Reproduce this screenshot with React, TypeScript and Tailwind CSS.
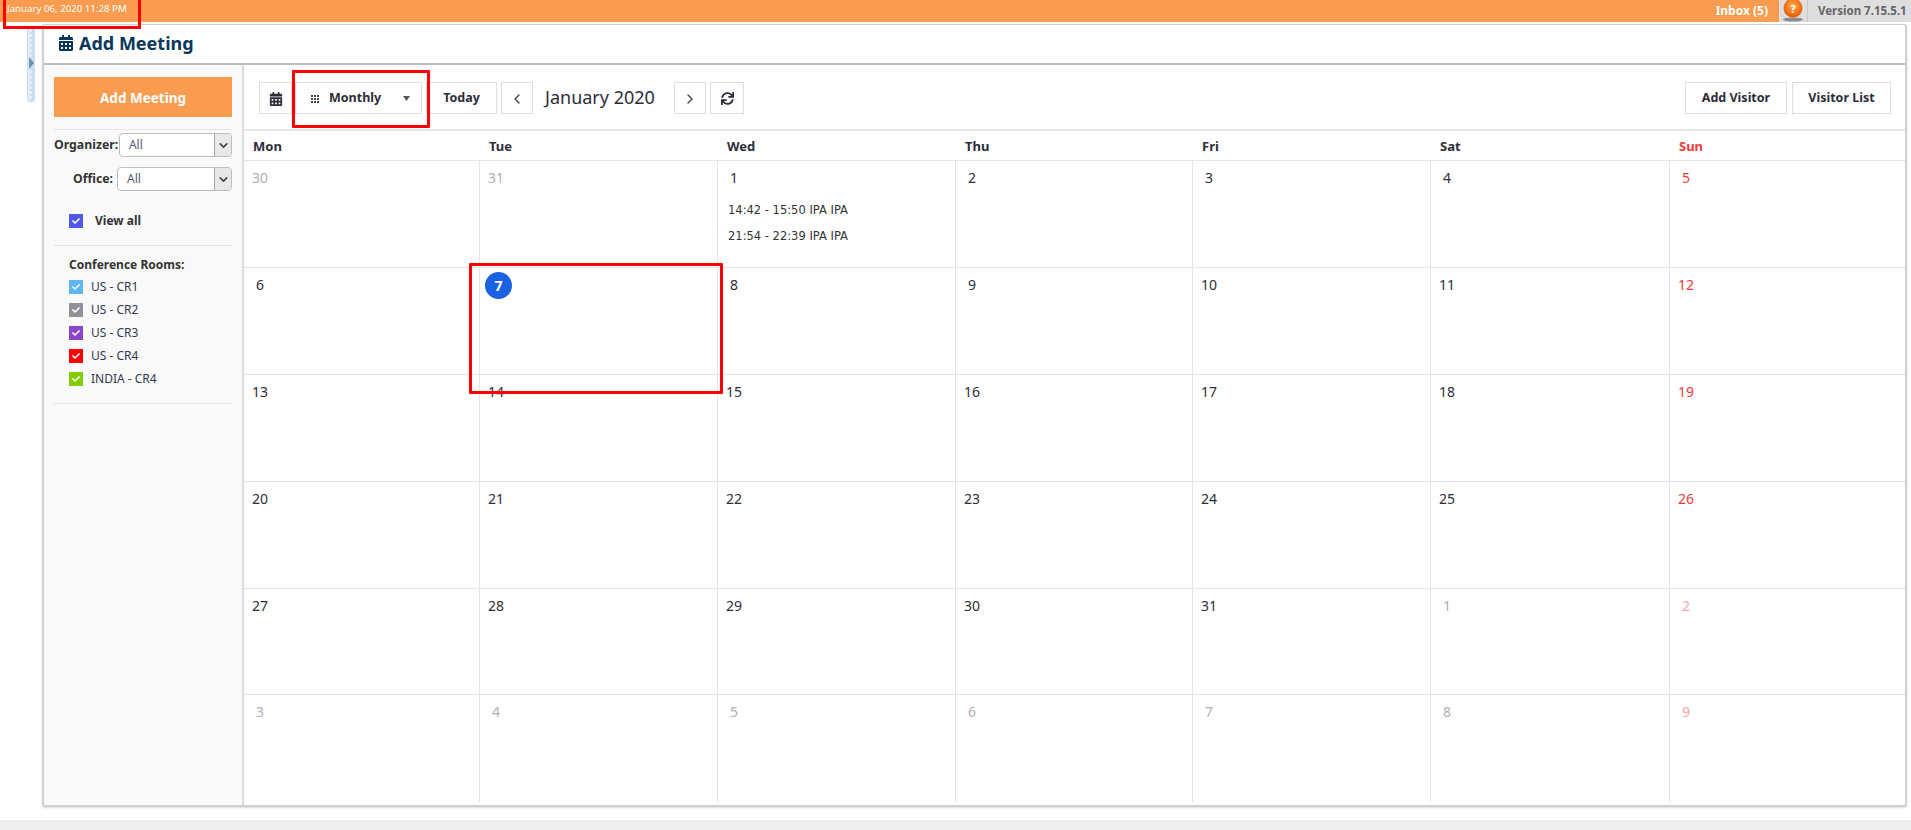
import { ChevronLeft, ChevronRight, ChevronDown } from "lucide-react";
import { FaCalendarAlt, FaCheck, FaSync } from "react-icons/fa";

const rooms = [
  { name: "US - CR1", color: "bg-[#5cb7f4]" },
  { name: "US - CR2", color: "bg-[#8f9196]" },
  { name: "US - CR3", color: "bg-[#8b45c9]" },
  { name: "US - CR4", color: "bg-[#ff0000]" },
  { name: "INDIA - CR4", color: "bg-[#84cc00]" },
];

const weekdays = ["Mon", "Tue", "Wed", "Thu", "Fri", "Sat", "Sun"];

const weeks = [
  [30, 31, 1, 2, 3, 4, 5],
  [6, 7, 8, 9, 10, 11, 12],
  [13, 14, 15, 16, 17, 18, 19],
  [20, 21, 22, 23, 24, 25, 26],
  [27, 28, 29, 30, 31, 1, 2],
  [3, 4, 5, 6, 7, 8, 9],
];

const columns = "grid-cols-[236px_238px_238px_237px_238px_239px_1fr]";

function ToolButton({ className, children }: { className: string; children: React.ReactNode }) {
  return (
    <div className={`flex h-8 shrink-0 items-center justify-center border border-[#dedede] bg-white pt-[2px] text-[12.5px] font-bold text-[#2d2d3a] ${className}`}>
      {children}
    </div>
  );
}

function SideSelect({ label, labelWidth }: { label: string; labelWidth: string }) {
  return (
    <div className="flex h-[24px] items-center justify-end">
      <span className={`text-[12.3px] font-bold text-[#333] ${labelWidth}`}>{label}</span>
      <div className="flex h-[24px] w-[115px] items-stretch rounded-[4px] border border-[#bdbdbd] bg-white">
        <span className="flex-1 pl-[9px] text-[12px] leading-[22px] text-[#555a70]">All</span>
        <span className="flex w-[17px] items-center justify-center rounded-r-[3px] border-l border-[#a8a8a8] bg-[#e8e8e8]">
          <ChevronDown size={13} strokeWidth={3} className="text-[#444]" />
        </span>
      </div>
    </div>
  );
}

function Box({ color }: { color: string }) {
  return (
    <span className={`flex h-[14px] w-[14px] shrink-0 items-center justify-center ${color}`}>
      <FaCheck size={8} className="text-white" />
    </span>
  );
}

function Sidebar() {
  return (
    <aside className="flex w-[200px] shrink-0 flex-col border-r-2 border-[#dcdcdc] bg-[#f9f9f9] px-[10px] pt-[12px]">
      <div className="flex h-[40px] items-center justify-center bg-[#f99c4f] pt-[2px] text-[13.5px] font-bold text-white">Add Meeting</div>
      <div className="mt-[12px] flex flex-col gap-[10px] border-t border-[#e4e4e4] pt-[3px]">
        <SideSelect label="Organizer:" labelWidth="w-[66px]" />
        <SideSelect label="Office:" labelWidth="w-[42px] mr-[2px]" />
      </div>
      <div className="mt-[21px] flex items-center gap-[12px] pl-[15px] text-[12px] font-bold text-[#333]">
        <Box color="bg-[#4f58e8]" />
        View all
      </div>
      <div className="mt-[15px] border-y border-[#e4e4e4] pb-[17px] pl-[15px] pt-[10px]">
        <div className="text-[12px] font-bold leading-[18px] text-[#333]">Conference Rooms:</div>
        <div className="mt-[6px] flex flex-col gap-[9px]">
          {rooms.map((room) => (
            <div key={room.name} className="flex h-[14px] items-center gap-[8px] text-[12px] text-[#333850]">
              <Box color={room.color} />
              {room.name}
            </div>
          ))}
        </div>
      </div>
    </aside>
  );
}

function Toolbar() {
  return (
    <div className="flex h-[66px] shrink-0 items-center border-b-2 border-[#e6e6e6] pl-[15px] pr-[14px] pt-[1px]">
      <ToolButton className="w-[33px]">
        <FaCalendarAlt size={14} />
      </ToolButton>
      <ToolButton className="ml-[3px] w-[127px] !justify-start pl-[15px]">
        <svg width="8" height="8" viewBox="0 0 8 8" className="fill-[#444]">
          {[0, 3, 6].map((y) =>
            [0, 3, 6].map((x) => <rect key={`${x}-${y}`} x={x} y={y} width="2" height="2" />)
          )}
        </svg>
        <span className="ml-[10px]">Monthly</span>
        <svg width="7" height="5" viewBox="0 0 7 5" className="ml-[22px] fill-[#555]">
          <path d="M0 0h7L3.5 5z" />
        </svg>
      </ToolButton>
      <ToolButton className="ml-[4px] w-[71px]">Today</ToolButton>
      <ToolButton className="ml-[4px] w-[32px]">
        <ChevronLeft size={16} strokeWidth={2} className="text-[#444]" />
      </ToolButton>
      <span className="ml-[12px] w-[129px] text-[18px] text-[#2d2d3a]">January 2020</span>
      <ToolButton className="w-[32px]">
        <ChevronRight size={16} strokeWidth={2} className="text-[#444]" />
      </ToolButton>
      <ToolButton className="ml-[4px] w-[34px]">
        <FaSync size={13} />
      </ToolButton>
      <ToolButton className="ml-auto w-[102px]">Add Visitor</ToolButton>
      <ToolButton className="ml-[5px] w-[99px]">Visitor List</ToolButton>
    </div>
  );
}

function DayCell({ day, week, col }: { day: number; week: number; col: number }) {
  const outside = (week === 0 && day > 20) || (week >= 4 && day < 20 && (week === 5 || day < 3));
  const sunday = col === 6;
  const today = week === 1 && day === 7;
  const color = outside ? (sunday ? "text-[#f5a8a8]" : "text-[#b3aeae]") : sunday ? "text-[#f03a3a]" : "text-[#2d2d3a]";

  return (
    <div className={`min-w-0 ${col < 6 ? "border-r border-[#e4e4e4]" : ""} ${week < 5 ? "border-b border-[#e4e4e4]" : ""}`}>
      {today ? (
        <div className="ml-[5px] mt-[4px] flex h-[27px] w-[27px] items-center justify-center rounded-full bg-[#1a62e3] text-[14px] font-bold text-white">
          {day}
        </div>
      ) : (
        <div className={`mt-[7px] w-[32px] text-center text-[14px] leading-[20px] ${color}`}>{day}</div>
      )}
      {week === 0 && day === 1 && (
        <div className="ml-[10px] mt-[14px] flex flex-col gap-[10px] font-['DejaVu_Sans',sans-serif] text-[11.5px] leading-[16px] text-[#333]">
          <span>14:42 - 15:50 IPA IPA</span>
          <span>21:54 - 22:39 IPA IPA</span>
        </div>
      )}
    </div>
  );
}

function Calendar() {
  return (
    <div className="flex min-w-0 flex-1 flex-col">
      <Toolbar />
      <div className={`grid h-[30px] shrink-0 border-b border-[#e4e4e4] ${columns}`}>
        {weekdays.map((name) => (
          <div key={name} className={`pl-[9px] text-[13px] font-bold leading-[30px] ${name === "Sun" ? "text-[#f03a3a]" : "text-[#2d2d3a]"}`}>
            {name}
          </div>
        ))}
      </div>
      <div className={`grid auto-rows-[106.9px] ${columns}`}>
        {weeks.map((days, week) =>
          days.map((day, col) => <DayCell key={`${week}-${col}`} day={day} week={week} col={col} />)
        )}
      </div>
    </div>
  );
}

export default function App() {
  return (
    <div className="relative flex h-screen flex-col overflow-hidden bg-white font-['Noto_Sans','DejaVu_Sans',sans-serif]">
      {/* top bar */}
      <header className="flex h-[22px] shrink-0 items-center bg-[#f99c4f]">
        <span className="-mt-[4px] pl-[7px] text-[9.7px] text-white">January 06, 2020 11:28 PM</span>
        <span className="ml-auto mr-[11px] text-[12px] font-bold text-white">Inbox (5)</span>
        <div className="flex h-full w-[132px] items-center bg-[#dedede]">
          <div className="flex h-full w-[29px] items-center justify-center border-r border-[#c8c8c8]">
            <svg width="22" height="22" viewBox="0 0 22 22">
              <defs>
                <radialGradient id="orb" cx="50%" cy="40%" r="60%">
                  <stop offset="0%" stopColor="#ffb04a" />
                  <stop offset="100%" stopColor="#e85505" />
                </radialGradient>
              </defs>
              <ellipse cx="11" cy="19.5" rx="10" ry="2" fill="#555" opacity="0.6" />
              <circle cx="11" cy="8" r="9.5" fill="url(#orb)" />
              <text x="11" y="12.5" textAnchor="middle" fontSize="11" fontWeight="700" fill="#fff">?</text>
            </svg>
          </div>
          <span className="pl-[10px] text-[11.5px] font-bold text-[#666]">Version 7.15.5.1</span>
        </div>
      </header>

      <div className="flex min-h-0 flex-1 pr-[4px]">
        {/* collapse handle */}
        <svg width="8" height="76" viewBox="0 0 8 76" className="ml-[27px] mt-[4px] shrink-0">
          <rect width="8" height="76" rx="3" fill="#c9dcf0" />
          <rect x="1" width="2" height="76" fill="#e2edf8" />
          <path d="M4 3v30M4 45v28" stroke="#fff" strokeDasharray="3 2" />
          <path d="M2 31l5 6-5 6z" fill="#6c8fbe" />
        </svg>
        {/* main card */}
        <main className="mb-[13px] ml-[7px] mt-[2px] flex min-w-0 flex-1 flex-col rounded-[3px] border-b-2 border-l-2 border-r-2 border-t border-[#d0d0d0] bg-white shadow-[0_1px_2px_rgba(0,0,0,0.15)]">
          <div className="flex h-[40px] shrink-0 items-center gap-[5px] border-b-2 border-[#bcbcbc] pb-[2px] pl-[14px] text-[18px] font-bold text-[#07375c]">
            <FaCalendarAlt size={16} />
            Add Meeting
          </div>
          <div className="flex min-h-0 flex-1">
            <Sidebar />
            <Calendar />
          </div>
        </main>
      </div>

      <div className="h-[10px] shrink-0 bg-[#efefef]" />

      {/* red annotation boxes */}
      <div className="absolute left-[3px] top-0 h-[29px] w-[138px] rounded-[1px] border-[3px] border-t-0 border-[#ff0000]" />
      <div className="absolute left-[292px] top-[70px] h-[58px] w-[138px] rounded-[1px] border-[3px] border-[#ff0000]" />
      <div className="absolute left-[469px] top-[263px] h-[131px] w-[254px] rounded-[1px] border-[3px] border-[#ff0000]" />
    </div>
  );
}
